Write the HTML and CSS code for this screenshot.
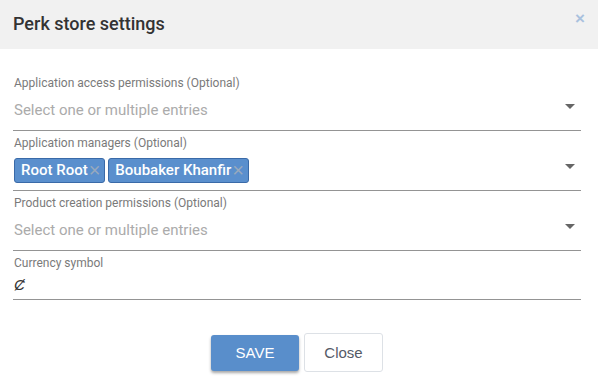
FILE: index.html
```html
<!DOCTYPE html>
<html>
<head>
<meta charset="utf-8">
<link rel="stylesheet" href="styles.css">
</head>
<body>
<div class="modal">
  <div class="header">
    <div class="title">Perk store settings</div>
    <div class="close-x">×</div>
  </div>
  <div class="body">
    <div class="field">
      <div class="label">Application access permissions (Optional)</div>
      <div class="control">
        <span class="placeholder">Select one or multiple entries</span>
        <span class="arrow"></span>
      </div>
    </div>
    <div class="field">
      <div class="label">Application managers (Optional)</div>
      <div class="control">
        <div class="chips">
          <span class="chip">Root Root<span class="chip-x">×</span></span>
          <span class="chip">Boubaker Khanfir<span class="chip-x">×</span></span>
        </div>
        <span class="arrow"></span>
      </div>
    </div>
    <div class="field">
      <div class="label">Product creation permissions (Optional)</div>
      <div class="control">
        <span class="placeholder">Select one or multiple entries</span>
        <span class="arrow"></span>
      </div>
    </div>
    <div class="field">
      <div class="label">Currency symbol</div>
      <div class="control short">
        <span class="value">Ȼ</span>
      </div>
    </div>
  </div>
  <div class="actions">
    <button class="btn save">SAVE</button>
    <button class="btn close">Close</button>
  </div>
</div>
</body>
</html>
```
FILE: styles.css
```css
html, body {
  margin: 0;
  padding: 0;
  background: #fff;
  font-family: Roboto, "Liberation Sans", sans-serif;
}
.modal {
  width: 598px;
  height: 379px;
  overflow: hidden;
}
.header {
  height: 49px;
  background: #f1f1f1;
  display: flex;
  align-items: center;
  justify-content: space-between;
  padding: 0 13px 0 13px;
  box-sizing: border-box;
}
.title {
  font-size: 18px;
  font-weight: 500;
  color: #333;
  margin-top: -2px;
}
.close-x {
  color: #a9c1de;
  font-size: 17px;
  font-weight: 700;
  font-family: "Liberation Sans", sans-serif;
  margin-top: -12px;
}
.body {
  padding: 22px 17px 0 13px;
}
.field {
  padding-top: 5px;
  border-bottom: 1px solid #949494;
}
.label {
  font-size: 12px;
  line-height: 14px;
  color: #7a7a7a;
  padding-left: 1px;
}
.control {
  height: 40px;
  display: flex;
  align-items: center;
  justify-content: space-between;
  padding-left: 1px;
}
.control.short {
  height: 29px;
}
.placeholder {
  font-size: 15px;
  color: #ababab;
  margin-top: -1px;
}
.value {
  font-size: 15px;
  color: #333;
  font-style: italic;
  margin-top: 1px;
}
.arrow {
  width: 0;
  height: 0;
  border-left: 5px solid transparent;
  border-right: 5px solid transparent;
  border-top: 5px solid #666;
  margin-right: 6px;
  margin-top: -8px;
}
.chips {
  display: flex;
  gap: 3px;
}
.chip {
  display: inline-flex;
  align-items: center;
  height: 25px;
  box-sizing: border-box;
  background: #5a8fcd;
  border: 1px solid #3a6aa8;
  border-radius: 3px;
  color: #fff;
  font-size: 15px;
  font-weight: 500;
  padding: 0 4px 0 6px;
}
.chip-x {
  color: #98a9bd;
  font-family: "Liberation Sans", sans-serif;
  font-size: 20px;
  line-height: 20px;
  font-weight: 400;
  margin-left: 1px;
}
.actions {
  display: flex;
  justify-content: center;
  align-items: center;
  gap: 5px;
  margin-top: 33px;
  padding-right: 4px;
}
.btn {
  font-family: "Liberation Sans", Arial, sans-serif;
  font-size: 15px;
  cursor: pointer;
  border-radius: 3px;
}
.save {
  width: 88px;
  height: 36px;
  background: #598ecb;
  color: #fff;
  border: none;
  box-shadow: 0 2px 3px rgba(0,0,0,0.35);
}
.close {
  width: 79px;
  height: 39px;
  background: #fff;
  color: #555a66;
  border: 1px solid #dde1e6;
}
```
